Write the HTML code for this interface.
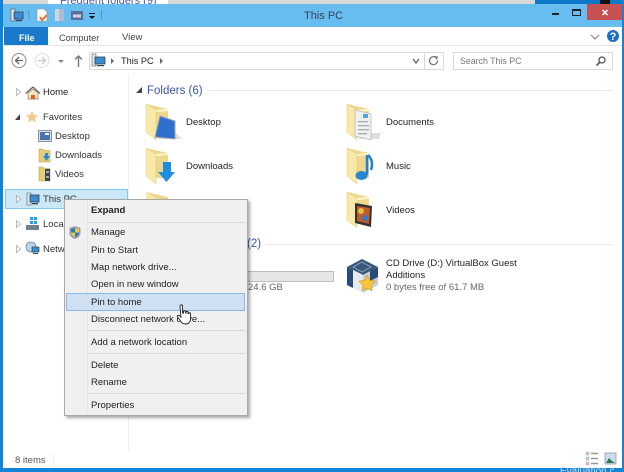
<!DOCTYPE html>
<html><head><meta charset="utf-8"><title>This PC</title>
<style>
html,body{margin:0;padding:0;background:#fff}
#r{position:relative;width:624px;height:472px;overflow:hidden;background:#fff;font-family:"Liberation Sans",sans-serif;font-size:9.5px;color:#222;filter:blur(.35px)}
.a{position:absolute}
.t{position:absolute;white-space:nowrap;line-height:12px;transform:translateY(-5px)}
.g{color:#666}
svg{position:absolute;overflow:visible}
</style></head><body><div id="r">
<!-- outside -->
<div class="a" style="left:0;top:0;width:624px;height:4px;background:#d8d8d8"></div>
<div class="a" style="left:48px;top:0;width:120px;height:4px;background:#fff"></div>
<div class="t" style="left:60px;top:0px;font-size:11px;color:#4a5aa8">Frequent folders (9)</div>
<div class="a" style="left:535px;top:0;width:89px;height:4px;background:#0b78c8"></div>
<div class="a" style="left:600px;top:0;width:10px;height:4px;background:#111"></div>
<div class="a" style="left:0;top:0;width:3px;height:472px;background:#1484d8"></div>
<div class="a" style="left:622px;top:0;width:2px;height:472px;background:#1484d8"></div>
<div class="a" style="left:0;top:468px;width:624px;height:4px;background:#1484d8"></div>
<div class="t" style="left:560px;top:471px;color:#cde;font-size:10px">Evaluation c</div>
<!-- title bar -->
<div class="a" style="left:3px;top:4px;width:619px;height:23px;background:#68bdf0"></div>
<div class="t" style="left:304px;top:15px;font-size:11px;color:#345">This PC</div>
<svg style="left:0;top:0" width="110" height="27">
<rect x="11" y="9" width="4" height="12" fill="#dfe8ee" stroke="#567" stroke-width=".7"/>
<rect x="14" y="12" width="9" height="7" fill="#3a8ed0" stroke="#345" stroke-width=".8"/><rect x="16" y="20" width="6" height="1.2" fill="#345"/>
<rect x="28.500" y="10" width=".8" height="9" fill="#58a"/>
<path d="M37 9h7l3 3v9H37z" fill="#fbfbf4" stroke="#999" stroke-width=".6"/><path d="M40 17l2 3 5-5" stroke="#e8743a" stroke-width="2" fill="none"/>
<rect x="55" y="9" width="9" height="12" fill="#cbd6e6"/><rect x="59" y="9" width="5" height="12" fill="#aebcd4"/>
<rect x="71" y="11" width="12" height="9" fill="#5a6f9c"/><rect x="73" y="14.500" width="8" height="3" fill="#cdd6e4"/>
<rect x="89" y="13" width="6" height="1" fill="#111"/><path d="M89 16h6l-3 3z" fill="#111"/>
<rect x="101" y="10" width=".8" height="9" fill="#58a"/>
</svg>
<svg style="left:540px;top:4px" width="84" height="24">
<rect x="12" y="9" width="7" height="2" fill="#222"/>
<rect x="32.500" y="5.500" width="8" height="6" fill="none" stroke="#222" stroke-width="1"/><rect x="32" y="5" width="9" height="2" fill="#222"/>
<rect x="47" y="0" width="35" height="16" fill="#c75050"/>
<path d="M62.500 6l5 5M67.500 6l-5 5" stroke="#fff" stroke-width="1.500"/>
</svg>
<!-- ribbon tabs -->
<div class="a" style="left:4px;top:27px;width:44px;height:18px;background:#1979ca"></div>
<div class="t" style="left:19px;top:37px;color:#fff;font-size:9px;font-weight:bold">File</div>
<div class="t" style="left:59px;top:37px;color:#444;font-size:9.200px">Computer</div>
<div class="t" style="left:122px;top:37px;color:#444;font-size:9.500px">View</div>
<div class="a" style="left:3px;top:45px;width:619px;height:1px;background:#e4e4e4"></div>
<svg style="left:590px;top:28px" width="34" height="18">
<path d="M1 7l4 4 4-4" fill="none" stroke="#888" stroke-width="1.200"/>
<circle cx="23" cy="8" r="6" fill="#1a6fc4"/>
<text x="23" y="12" font-size="11" font-weight="bold" fill="#fff" text-anchor="middle" font-family="Liberation Sans">?</text>
</svg>
<!-- address row -->
<svg style="left:0;top:46px" width="90" height="30">
<circle cx="19" cy="14.500" r="7" fill="#fff" stroke="#8a8a8a" stroke-width="1"/>
<path d="M23 14.500h-7M19 11l-3.500 3.500 3.500 3.500" fill="none" stroke="#666" stroke-width="1.300"/>
<circle cx="42" cy="14.500" r="7" fill="#fff" stroke="#ddd" stroke-width="1"/>
<path d="M38 14.500h7M42 11l3.500 3.500-3.500 3.500" fill="none" stroke="#ccc" stroke-width="1.300"/>
<path d="M58 14h6l-3 3z" fill="#888"/>
<path d="M78.500 21v-11M75 13.500l3.500-3.500 3.500 3.500" fill="none" stroke="#777" stroke-width="1.400"/>
</svg>
<div class="a" style="left:89px;top:52px;width:353px;height:16px;border:1px solid #d9d9d9"></div>
<div class="a" style="left:424px;top:52px;width:1px;height:17px;background:#d9d9d9"></div>
<svg style="left:90px;top:52px" width="360" height="18">
<rect x="2" y="2" width="4" height="12" fill="#dfe8ee" stroke="#678" stroke-width=".7"/>
<rect x="5" y="5" width="10" height="7" fill="#3a8ed0" stroke="#345" stroke-width=".8"/><rect x="7" y="13" width="7" height="1.200" fill="#345"/>
<path d="M21 6l3 3-3 3z" fill="#666"/><path d="M70 6l3 3-3 3z" fill="#666"/>
<path d="M323 7l3 4 3-4" fill="none" stroke="#666" stroke-width="1.300"/>
<path d="M346 5.500a4 4 0 1 0 1.500 3" fill="none" stroke="#777" stroke-width="1.300"/><path d="M344 4l4 0.500 -1 3.500z" fill="#777"/>
</svg>
<div class="t" style="left:121px;top:60px;font-size:9.200px;color:#222">This PC</div>
<div class="a" style="left:453px;top:52px;width:158px;height:16px;border:1px solid #d9d9d9"></div>
<div class="t g" style="left:460px;top:60px;font-size:8.800px;color:#777">Search This PC</div>
<svg style="left:595px;top:54px" width="16" height="14"><circle cx="7" cy="6" r="3" fill="none" stroke="#555" stroke-width="1.300"/><path d="M5 8l-3.500 3.500" stroke="#555" stroke-width="1.800"/></svg>
<!-- nav pane -->
<div class="a" style="left:128px;top:75px;width:1px;height:376px;background:#eee"></div>
<svg style="left:0;top:80px" width="128" height="185">
<path d="M16.500 8.500l4 3.500-4 3.500z" fill="#fff" stroke="#aaa" stroke-width=".8"/>
<path d="M33 7l-7.500 6.500M33 7l7 6.500" stroke="#666" stroke-width="1.300" fill="none"/><path d="M28 13v6h10v-6l-5-4z" fill="#f3e6c4" stroke="#8a7a60" stroke-width=".7"/><rect x="31" y="15" width="4" height="4" fill="#d9622a"/>
<path d="M20 34v6h-5z" fill="#444"/>
<path d="M32 31l1.800 4 4.300.5-3.200 2.800 1 4.300-3.900-2.300-3.900 2.300 1-4.300-3.200-2.800 4.300-.5z" fill="#f4c98a"/>
<rect x="38.500" y="50.500" width="13" height="11" fill="#d8dde6" stroke="#8b95a3"/><rect x="40" y="52" width="10" height="8" fill="#4a73b0"/><rect x="45" y="53" width="4" height="2" fill="#fff"/>
<path d="M39 69h4l1 1.500h6v11.500H39z" fill="#e9cd72" stroke="#b59c4e" stroke-width=".5"/><path d="M45 76v-3h3v3h2l-3.500 5-3.500-5z" fill="#2a8ad8"/>
<path d="M39 87h4l1 1.500h6v12.500H39z" fill="#e9cd72" stroke="#b59c4e" stroke-width=".5"/><rect x="45" y="89" width="5" height="12" fill="#3a4a50"/><rect x="46" y="91" width="3" height="2" fill="#9ab"/><rect x="46" y="96" width="3" height="2" fill="#9ab"/>
</svg>
<div class="t" style="left:43px;top:92px;font-size:9.500px">Home</div>
<div class="t" style="left:43px;top:117px;font-size:9.500px;color:#333">Favorites</div>
<div class="t" style="left:55px;top:136px;font-size:9.500px;color:#333">Desktop</div>
<div class="t" style="left:55px;top:155px;font-size:9.500px;color:#333">Downloads</div>
<div class="t" style="left:55px;top:174px;font-size:9.500px;color:#333">Videos</div>
<div class="a" style="left:5px;top:189px;width:121px;height:18px;background:#cbe8f6;border:1px solid #7fcaee"></div>
<div class="t" style="left:43px;top:199px;font-size:9.500px;color:#333">This PC</div>
<div class="t" style="left:43px;top:224px;font-size:9.500px;color:#333">Local Disk</div>
<div class="t" style="left:43px;top:249px;font-size:9.500px;color:#333">Network</div>
<svg style="left:0;top:190px" width="64" height="70">
<path d="M16.500 5.500l4 3.500-4 3.500z" fill="#fff" stroke="#aaa" stroke-width=".8"/>
<rect x="27" y="3" width="4" height="12" fill="#dfe8ee" stroke="#678" stroke-width=".7"/><rect x="30" y="5" width="9" height="7" fill="#3a8ed0" stroke="#345" stroke-width=".8"/><rect x="32" y="13" width="6" height="1.300" fill="#345"/>
<path d="M16.500 30.500l4 3.500-4 3.500z" fill="#fff" stroke="#aaa" stroke-width=".8"/>
<rect x="26" y="35" width="13" height="5" fill="#6f8088"/><rect x="30" y="27" width="3" height="3" fill="#1fa0ea"/><rect x="34" y="27" width="3" height="3" fill="#1fa0ea"/><rect x="30" y="31" width="3" height="3" fill="#1fa0ea"/><rect x="34" y="31" width="3" height="3" fill="#1fa0ea"/>
<path d="M16.500 55.500l4 3.500-4 3.500z" fill="#fff" stroke="#aaa" stroke-width=".8"/>
<circle cx="31" cy="57" r="5" fill="#bcd5e8" stroke="#6d8aa0" stroke-width=".8"/><rect x="32" y="57" width="7" height="5" fill="#3a8ed0" stroke="#345" stroke-width=".7"/><rect x="33" y="63" width="5" height="1" fill="#345"/>
</svg>
<!-- content -->
<svg style="left:131px;top:84px" width="14" height="12"><path d="M11 3v6h-6z" fill="#444"/></svg>
<div class="t" style="left:147px;top:90px;font-size:11.500px;color:#3c55ad">Folders (6)</div>
<div class="a" style="left:207px;top:90px;width:405px;height:1px;background:#e8e8e8"></div>
<svg width="0" height="0"><defs>
<g id="f"><path d="M0 0l22 5v25H10z" fill="#eed88e"/><path d="M0 0l10 6v30l-10-8z" fill="#f8e9a8" stroke="#e0c878" stroke-width=".5"/><path d="M10 6l12-1v2l-12 1z" fill="#fff6cf"/></g>
</defs></svg>
<svg style="left:146px;top:104px" width="40" height="40"><path d="M12 35h24l-6-6H12z" fill="#ddd"/><use href="#f"/><path d="M9 33l5-21 15 5v18z" fill="#2f6fd0" stroke="#9aa5ad" stroke-width="1"/></svg>
<svg style="left:146px;top:148px" width="40" height="40"><use href="#f"/><path d="M17 14h8v10h4L20.500 34 12 24h5z" fill="#1e8de0"/></svg>
<svg style="left:146px;top:192px" width="40" height="8" style="overflow:hidden"><path d="M0 0l22 5v3H0z" fill="#eed88e"/><path d="M0 0l10 6v2H0z" fill="#f8e9a8"/></svg>
<svg style="left:347px;top:104px" width="40" height="40"><path d="M12 35h20l2-6H12z" fill="#ddd"/><use href="#f"/><path d="M8 6l16 4v26l-16-4z" fill="#eef0f2" stroke="#aaa" stroke-width=".6"/><rect x="11" y="17" width="10" height="1.300" fill="#aaa"/><rect x="11" y="21" width="11" height="1.300" fill="#aaa"/><rect x="11" y="25" width="11" height="1.300" fill="#aaa"/><rect x="11" y="29" width="9" height="1.300" fill="#aaa"/><rect x="16" y="10" width="5" height="4" fill="#5ba4d8"/></svg>
<svg style="left:347px;top:148px" width="40" height="40"><use href="#f"/><path d="M20 7v20" stroke="#1f80d0" stroke-width="2.500"/><path d="M21 7c4 4 5 9 3 15" fill="none" stroke="#1f80d0" stroke-width="2.500"/><ellipse cx="14.500" cy="27.500" rx="6" ry="4.500" fill="#2a85d0"/></svg>
<svg style="left:347px;top:192px" width="40" height="40"><use href="#f"/><path d="M8 11l17 3-1 21-16-4z" fill="#333"/><path d="M10 14l13 2-1 16-12-3z" fill="#c05a30"/><circle cx="14" cy="19" r="3" fill="#e8c040"/><circle cx="18" cy="26" r="3" fill="#3a78b8"/></svg>
<div class="t" style="left:186px;top:122px;font-size:9.500px">Desktop</div>
<div class="t" style="left:186px;top:166px;font-size:9.500px">Downloads</div>
<div class="t" style="left:386px;top:122px;font-size:9.500px">Documents</div>
<div class="t" style="left:386px;top:166px;font-size:9.500px">Music</div>
<div class="t" style="left:386px;top:210px;font-size:9.500px">Videos</div>
<div class="t" style="left:247px;top:243px;font-size:11.500px;color:#3c55ad">(2)</div>
<div class="a" style="left:266px;top:244px;width:346px;height:1px;background:#e8e8e8"></div>
<div class="a" style="left:240px;top:271px;width:92px;height:9px;background:#e6e6e6;border:1px solid #bcbcbc"></div>
<div class="t g" style="left:248px;top:287px;font-size:9.500px">24.6 GB</div>
<svg style="left:345px;top:258px" width="36" height="40">
<path d="M2 9l15-8 16 8-15 8z" fill="#36587f"/>
<path d="M8 9l9-5 9 5-9 5z" fill="none" stroke="#9ab" stroke-width=".8"/>
<path d="M2 9l16 8v18L2 27z" fill="#e8ebee"/><path d="M2 9l6 3v18l-6-3z" fill="#2a4a78"/>
<path d="M18 17l15-8v18l-15 8z" fill="#c8ced6"/><path d="M25 13l8-4v10l-8 4z" fill="#2a4a78"/>
<path d="M22 17l2.600 5.300 5.900.8-4.300 4.100 1 5.800-5.200-2.800-5.200 2.800 1-5.800-4.300-4.100 5.900-.8z" fill="#f6c33a" stroke="#c98c10" stroke-width=".5"/>
</svg>
<div class="t" style="left:386px;top:263px;font-size:9.500px">CD Drive (D:) VirtualBox Guest</div>
<div class="t" style="left:386px;top:275px;font-size:9.500px">Additions</div>
<div class="t g" style="left:386px;top:287px;font-size:9.500px">0 bytes free of 61.7 MB</div>
<!-- status -->
<div class="t" style="left:15px;top:460px;font-size:9.500px;color:#555">8 items</div>
<div class="a" style="left:53px;top:454px;width:1px;height:13px;background:#eee"></div>
<svg style="left:586px;top:452px" width="32" height="14">
<rect x="0" y="0" width="3" height="3" fill="#f0c0c0" stroke="#aaa" stroke-width=".5"/><rect x="0" y="5" width="3" height="3" fill="#c0d0f0" stroke="#aaa" stroke-width=".5"/><rect x="0" y="10" width="3" height="3" fill="#f0c0c0" stroke="#aaa" stroke-width=".5"/>
<path d="M5 1.500h7M5 6.500h7M5 11.500h7" stroke="#999" stroke-width="1.500"/>
<rect x="19" y="1" width="11" height="11" fill="#cde" stroke="#88a" stroke-width=".7"/><path d="M20 11l3-5 3 3 3 2z" fill="#2c7a4a"/>
</svg>
<!-- menu -->
<div class="a" style="left:64px;top:199px;width:182px;height:215px;background:#f0f0f0;border:1px solid #a8a8a8;box-shadow:2px 2px 3px rgba(0,0,0,.35)"></div>
<div class="a" style="left:87px;top:200px;width:1px;height:214px;background:#e6e6e6"></div>
<div class="a" style="left:88px;top:222px;width:157px;height:1px;background:#d7d7d7"></div>
<div class="a" style="left:88px;top:330px;width:157px;height:1px;background:#d7d7d7"></div>
<div class="a" style="left:88px;top:353px;width:157px;height:1px;background:#d7d7d7"></div>
<div class="a" style="left:88px;top:393px;width:157px;height:1px;background:#d7d7d7"></div>
<div class="a" style="left:66px;top:293px;width:177px;height:16px;background:#cfe0f2;border:1px solid #8ab9e8"></div>
<svg style="left:68px;top:225px" width="14" height="15"><path d="M7 1l5.500 2v5c0 3-2.500 5-5.500 6-3-1-5.500-3-5.500-6V3z" fill="#9aa0a8"/><path d="M7 3v4.500H3V4z" fill="#2a78d0"/><path d="M7 3l4 1v3.500H7z" fill="#f2c830"/><path d="M3 7.500h4V12c-2-.7-4-2-4-4.500z" fill="#f2c830"/><path d="M7 7.500h4c0 2.500-2 3.800-4 4.500z" fill="#2a78d0"/></svg>
<div class="t" style="left:91px;top:210px;font-size:9.500px;font-weight:bold">Expand</div>
<div class="t" style="left:91px;top:232px;font-size:9.500px">Manage</div>
<div class="t" style="left:91px;top:250px;font-size:9.500px">Pin to Start</div>
<div class="t" style="left:91px;top:267px;font-size:9.500px">Map network drive...</div>
<div class="t" style="left:91px;top:284px;font-size:9.500px">Open in new window</div>
<div class="t" style="left:91px;top:302px;font-size:9.500px">Pin to home</div>
<div class="t" style="left:91px;top:319px;font-size:9.500px">Disconnect network drive...</div>
<div class="t" style="left:91px;top:342px;font-size:9.500px">Add a network location</div>
<div class="t" style="left:91px;top:365px;font-size:9.500px">Delete</div>
<div class="t" style="left:91px;top:382px;font-size:9.500px">Rename</div>
<div class="t" style="left:91px;top:405px;font-size:9.500px">Properties</div>
<!-- hand cursor -->
<svg style="left:176px;top:304px" width="16" height="22"><path d="M4 2c0-1.500 2.500-1.500 2.500 0v7l1 0V7.500c0-1 2-1 2 0V9h.5V8c0-1 2-1 2 0v1.500h.5c0-1 2-1 2 0V15c0 3-2 5-5 5-2.500 0-4-1-5-3l-3-4c-.7-1.200.8-2.300 2-1.300l1.500 1.500z" fill="#fff" stroke="#222" stroke-width=".9"/></svg>
</div></body></html>
